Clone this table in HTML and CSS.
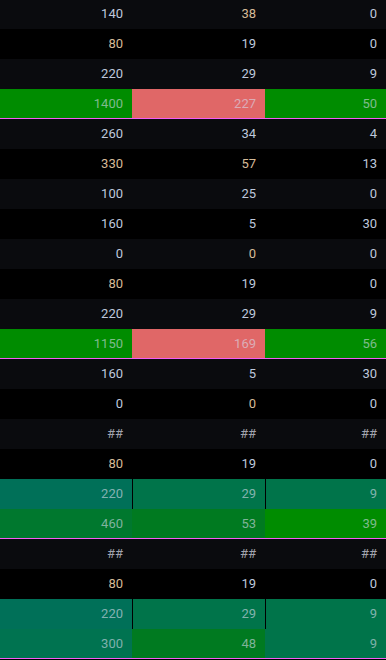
FILE: index.html
```html
<!DOCTYPE html>
<html>
<head>
<meta charset="utf-8">
<link rel="stylesheet" href="styles.css">
</head>
<body>
<table class="grid">
  <colgroup><col class="c1"><col class="c2"><col class="c3"></colgroup>
  <tbody>
    <tr class="r-dark"><td>140</td><td class="warm">38</td><td>0</td></tr>
    <tr class="r-black"><td class="warm">80</td><td>19</td><td>0</td></tr>
    <tr class="r-dark"><td>220</td><td>29</td><td>9</td></tr>
    <tr class="r-total"><td class="g">1400</td><td class="p">227</td><td class="g">50</td></tr>
    <tr class="r-dark"><td>260</td><td>34</td><td>4</td></tr>
    <tr class="r-black"><td class="warm">330</td><td class="warm">57</td><td>13</td></tr>
    <tr class="r-dark"><td>100</td><td>25</td><td>0</td></tr>
    <tr class="r-black"><td>160</td><td>5</td><td>30</td></tr>
    <tr class="r-dark"><td>0</td><td class="warm">0</td><td>0</td></tr>
    <tr class="r-black"><td class="warm">80</td><td>19</td><td>0</td></tr>
    <tr class="r-dark"><td>220</td><td>29</td><td>9</td></tr>
    <tr class="r-total"><td class="g">1150</td><td class="p">169</td><td class="g">56</td></tr>
    <tr class="r-dark"><td>160</td><td>5</td><td>30</td></tr>
    <tr class="r-black"><td>0</td><td class="warm">0</td><td>0</td></tr>
    <tr class="r-dark"><td class="na">##</td><td class="na">##</td><td class="na">##</td></tr>
    <tr class="r-black"><td class="warm">80</td><td>19</td><td>0</td></tr>
    <tr class="r-heat"><td class="teal">220</td><td class="sea sep">29</td><td class="sea sep">9</td></tr>
    <tr class="r-total"><td class="h1">460</td><td class="h2">53</td><td class="g">39</td></tr>
    <tr class="r-dark"><td class="na">##</td><td class="na">##</td><td class="na">##</td></tr>
    <tr class="r-black"><td class="warm">80</td><td>19</td><td>0</td></tr>
    <tr class="r-heat"><td class="teal">220</td><td class="sea sep">29</td><td class="sea sep">9</td></tr>
    <tr class="r-total"><td class="h3">300</td><td class="h2">48</td><td class="sea">9</td></tr>
  </tbody>
</table>
</body>
</html>
```

FILE: styles.css
```css
html, body {
  margin: 0;
  padding: 0;
  background: #000;
}
body {
  font-family: Roboto, "Liberation Sans", sans-serif;
  font-size: 13px;
  color: #bec8dc;
  overflow: hidden;
}
.grid {
  width: 386px;
  border-collapse: separate;
  border-spacing: 0;
  table-layout: fixed;
  margin-top: -1px;
}
.c1 { width: 132px; }
.c2 { width: 133px; }
.c3 { width: 121px; }
.grid td {
  height: 30px;
  padding: 0 9px 0 0;
  box-sizing: border-box;
  text-align: right;
  vertical-align: middle;
  line-height: 16px;
}
.r-dark td { background: #0a0b0e; }
.r-black td { background: #000; }
.r-total td {
  border-bottom: 1px solid #f55cf5;
  color: rgba(215, 220, 235, 0.6);
}
.r-heat td { color: rgba(215, 220, 235, 0.62); }
.warm { color: #d6bb98; }
.na { color: #a2a4ae; }
.g { background: #008c00; }
.p { background: #e06767; }
.teal { background: #007058; }
.sea { background: #00744a; }
.sep { border-left: 1px solid #000; }
.h1 { background: #00782e; }
.h2 { background: #007a20; }
.h3 { background: #007350; }
```
